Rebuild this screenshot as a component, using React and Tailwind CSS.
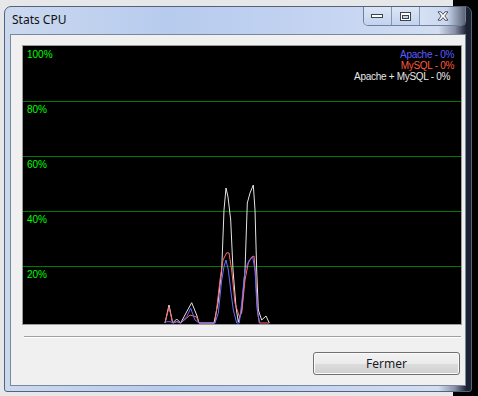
const white = [
  [165, 323], [169, 305], [172.7, 323], [176.7, 319], [180.7, 323], [186, 313], [191.7, 302.7], [196.7, 315], [199, 323],
  [214, 323], [218, 303], [221.7, 270], [224, 210], [226, 188], [228, 197], [230.7, 220], [233, 270], [236, 307], [238.3, 322],
  [241.7, 310], [245, 270], [247.3, 203], [250, 193], [253.3, 185], [255, 210], [256.7, 270], [258.3, 310], [261.7, 320],
  [266, 316], [269.3, 323],
];

const red = [
  [165, 323], [169, 307], [172.7, 323], [176.7, 321.7], [180.7, 323], [186.7, 318], [190, 315], [196.7, 317], [199, 323],
  [215, 323], [220, 280], [223, 260], [226.7, 252.7], [229, 253], [231.7, 270], [235, 303], [239.3, 316.7], [241.7, 313],
  [245, 280], [248.3, 263], [251.7, 257], [254, 256], [256, 280], [257.3, 310], [259.3, 323], [269.3, 323],
];

const blue = [
  [165, 323], [166.7, 321.7], [170, 321.7], [173.3, 323], [176.7, 321.7], [180.7, 323], [186.7, 316.7], [190.7, 308.3],
  [195, 320], [199, 323], [215, 323], [218.3, 313], [221.7, 280], [224, 266.7], [226, 260], [228.3, 270], [230.7, 290],
  [233.3, 310], [236.7, 323], [239.3, 323], [241.7, 303], [245, 270], [249.3, 260], [252.7, 257], [255, 270], [256.7, 303],
  [258.3, 316.7], [260, 323],
];

const pts = (list) => list.map(([x, y]) => `${x},${y}`).join(" ");

const labels = ["100%", "80%", "60%", "40%", "20%"];

const CpuGraph = () => (
  <div className="relative ml-[11px] mt-[10px] w-[440px] h-[280px] border border-[#9c9c9c] bg-black font-['Liberation_Sans',Arial,sans-serif]">
    <svg width="438" height="278" viewBox="23 46 438 278" className="block">
      {[101, 156, 211, 266].map((y) => (
        <line key={y} x1="23" x2="461" y1={y + 0.5} y2={y + 0.5} stroke="#007a00" strokeWidth="1" />
      ))}
      <polyline points={pts(white)} fill="none" stroke="#e4e4e4" strokeWidth="1" />
      <polyline points={pts(red)} fill="none" stroke="#ff6a6a" strokeWidth="1" />
      <polyline points={pts(blue)} fill="none" stroke="#6c6cff" strokeWidth="1" />
    </svg>
    {labels.map((l, i) => (
      <div
        key={l}
        className="absolute left-[4px] text-[10px] leading-[11px] text-[#00ff00]"
        style={{ top: 3 + i * 55 }}
      >
        {l}
      </div>
    ))}
    <div className="absolute right-[7px] top-[3px] flex flex-col items-end text-[10px] leading-[11px] tracking-[-0.3px]">
      <span className="text-[#5c5cff]">Apache - 0%</span>
      <span className="text-[#ff5a3c]">MySQL - 0%</span>
      <span className="text-[#e8e8e8] mr-[4px]">Apache + MySQL - 0%</span>
    </div>
  </div>
);

const TitleButtons = () => (
  <div className="flex h-[19px] mr-[5px] border border-t-0 border-[#6f819e] rounded-b-[5px] overflow-hidden">
    <div className="w-[28px] flex items-center justify-center border-r border-[#8596b3] bg-[linear-gradient(#dbe5f5,#c3d3ee)]">
      <svg width="13" height="5" viewBox="0 0 13 5">
        <rect x="0.5" y="0.5" width="11" height="3" fill="#ffffff" stroke="#3c4350" />
      </svg>
    </div>
    <div className="w-[28px] flex items-center justify-center border-r border-[#8596b3] bg-[linear-gradient(#dbe5f5,#c3d3ee)]">
      <svg width="11" height="9" viewBox="0 0 11 9">
        <rect x="0.5" y="0.5" width="10" height="8" fill="#ffffff" stroke="#3c4350" />
        <rect x="2.5" y="3.5" width="6" height="3" fill="#c8d2e2" stroke="#3c4350" />
      </svg>
    </div>
    <div className="w-[45px] flex items-center justify-center bg-[linear-gradient(to_right,#d6e1f4,#c9d6ee_60%,#5c6478)]">
      <svg width="12" height="10" viewBox="0 0 12 10">
        <path d="M1 0.8 H4 L6 3.4 L8 0.8 H11 L7.8 5 L11 9.2 H8 L6 6.6 L4 9.2 H1 L4.2 5 Z" fill="#ffffff" stroke="#3c4350" strokeWidth="0.9" />
      </svg>
    </div>
  </div>
);

export default function App() {
  return (
    <div className="w-[478px] h-[396px] overflow-hidden pl-[4px] pt-[6px] bg-[linear-gradient(to_right,#e6e7e9_0px,#e6e7e9_453px,#000_453px)] font-['Noto_Sans',sans-serif]">
      <div className="w-[468px] h-[386px] flex flex-col rounded-t-[7px] rounded-b-[3px] border border-[#56627a] bg-[linear-gradient(to_right,#cbd9ef_0%,#b7cbee_35%,#c3d3f1_65%,#d2ddf2_93%,#8891a8_96.5%,#1d2231_99%)]">
        <div className="h-[27px] flex items-start justify-between">
          <span className="pl-[7px] pt-[5px] text-[12px] leading-[16px] text-[#111]">Stats CPU</span>
          <TitleButtons />
        </div>
        <div className="ml-[5px] w-[456px] h-[352px] border border-[#7b889c] bg-[#f0f0f0] flex flex-col">
          <CpuGraph />
          <div className="ml-[13px] mt-[11px] w-[437px] border-t border-[#a0a0a0] border-b border-b-white" />
          <div className="flex justify-end mr-[5px] mt-[14px]">
            <button className="w-[147px] h-[23px] rounded-[3px] border border-[#707070] bg-[linear-gradient(#f2f2f2_0%,#ebebeb_50%,#dddddd_50%,#cfcfcf_100%)] text-[12px] text-[#1a1a2a] font-['Noto_Sans',sans-serif] shadow-[inset_0_0_0_1px_#fbfbfb]">
              Fermer
            </button>
          </div>
        </div>
      </div>
    </div>
  );
}
